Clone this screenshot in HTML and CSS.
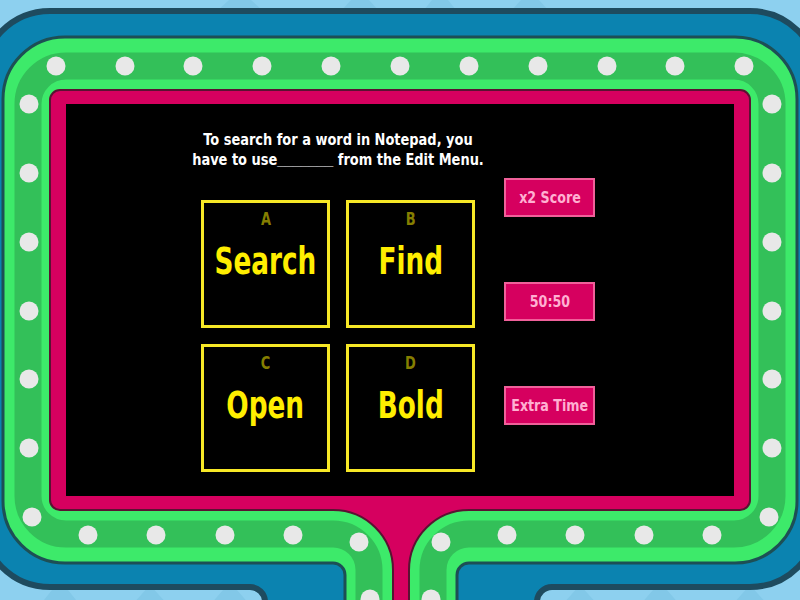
FILE: index.html
```html
<!DOCTYPE html>
<html lang="en">
<head>
<meta charset="utf-8">
<title>Game Show Quiz</title>
<link rel="stylesheet" href="styles.css">
</head>
<body>
<div class="stage">
  <svg class="frame" width="800" height="600" viewBox="0 0 800 600" aria-hidden="true">
    <rect x="0" y="0" width="800" height="600" fill="#8dd0ef"/>
    <g fill="#82c8e8">
      <polygon points="240,-10 262,10 218,10"/>
      <polygon points="360,-10 378,10 342,10"/>
      <polygon points="440,-10 456,10 424,10"/>
      <polygon points="530,-10 548,10 512,10"/>
      <polygon points="60,580 80,605 40,605"/>
      <polygon points="150,585 168,605 132,605"/>
      <polygon points="230,582 250,605 210,605"/>
      <polygon points="580,585 598,605 562,605"/>
      <polygon points="660,582 680,605 640,605"/>
      <polygon points="750,585 768,605 732,605"/>
    </g>
    <path class="blue" d="M -18 79 A 68 68 0 0 1 50 11 L 750 11 A 68 68 0 0 1 818 79 L 818 519 A 68 68 0 0 1 750 587 L 552 587 A 15 15 0 0 0 537 602 L 537 620 L 265 620 L 265 602 A 15 15 0 0 0 250 587 L 50 587 A 68 68 0 0 1 -18 519 Z"/>
    <path class="green" d="M 3 99 A 62 62 0 0 1 65 37 L 735 37 A 62 62 0 0 1 797 99 L 797 501 A 62 62 0 0 1 735 563 L 469 563 A 12 12 0 0 0 457 575 L 457 620 L 345 620 L 345 575 A 12 12 0 0 0 333 563 L 65 563 A 62 62 0 0 1 3 501 Z"/>
    <path class="band" d="M 369 620 L 369 570 A 36 36 0 0 0 333 534 L 66 534 A 38 38 0 0 1 28 496 L 28 104 A 38 38 0 0 1 66 66 L 734 66 A 38 38 0 0 1 772 104 L 772 496 A 38 38 0 0 1 734 534 L 469 534 A 36 36 0 0 0 433 570 L 433 620"/>
    <g fill="#e8e8e8">
      <circle cx="56" cy="66" r="9.5"/>
      <circle cx="125" cy="66" r="9.5"/>
      <circle cx="193" cy="66" r="9.5"/>
      <circle cx="262" cy="66" r="9.5"/>
      <circle cx="331" cy="66" r="9.5"/>
      <circle cx="400" cy="66" r="9.5"/>
      <circle cx="469" cy="66" r="9.5"/>
      <circle cx="538" cy="66" r="9.5"/>
      <circle cx="607" cy="66" r="9.5"/>
      <circle cx="675" cy="66" r="9.5"/>
      <circle cx="744" cy="66" r="9.5"/>
      <circle cx="29" cy="104" r="9.5"/>
      <circle cx="29" cy="173" r="9.5"/>
      <circle cx="29" cy="242" r="9.5"/>
      <circle cx="29" cy="311" r="9.5"/>
      <circle cx="29" cy="379" r="9.5"/>
      <circle cx="29" cy="448" r="9.5"/>
      <circle cx="32" cy="517" r="9.5"/>
      <circle cx="772" cy="104" r="9.5"/>
      <circle cx="772" cy="173" r="9.5"/>
      <circle cx="772" cy="242" r="9.5"/>
      <circle cx="772" cy="311" r="9.5"/>
      <circle cx="772" cy="379" r="9.5"/>
      <circle cx="772" cy="448" r="9.5"/>
      <circle cx="769" cy="517" r="9.5"/>
      <circle cx="88" cy="535" r="9.5"/>
      <circle cx="156" cy="535" r="9.5"/>
      <circle cx="225" cy="535" r="9.5"/>
      <circle cx="293" cy="535" r="9.5"/>
      <circle cx="359" cy="542" r="9.5"/>
      <circle cx="370" cy="599" r="9.5"/>
      <circle cx="441" cy="542" r="9.5"/>
      <circle cx="431" cy="599" r="9.5"/>
      <circle cx="507" cy="535" r="9.5"/>
      <circle cx="575" cy="535" r="9.5"/>
      <circle cx="644" cy="535" r="9.5"/>
      <circle cx="712" cy="535" r="9.5"/>
    </g>
    <path class="pink" d="M 60 90 L 740 90 A 10 10 0 0 1 750 100 L 750 500 A 10 10 0 0 1 740 510 L 469 510 A 60 60 0 0 0 409 570 L 409 620 L 393 620 L 393 570 A 60 60 0 0 0 333 510 L 60 510 A 10 10 0 0 1 50 500 L 50 100 A 10 10 0 0 1 60 90 Z"/>
  </svg>

  <div class="screen">
    <div class="main">
      <p class="question">To search for a word in Notepad, you<br>have to use<span class="blank">_______</span> from the Edit Menu.</p>
      <div class="answers">
        <div class="answer"><span class="letter">A</span><span class="text">Search</span></div>
        <div class="answer"><span class="letter">B</span><span class="text">Find</span></div>
        <div class="answer"><span class="letter">C</span><span class="text">Open</span></div>
        <div class="answer"><span class="letter">D</span><span class="text">Bold</span></div>
      </div>
    </div>
    <div class="powerups">
      <div class="power"><span class="power-label">x2 Score</span></div>
      <div class="power"><span class="power-label">50:50</span></div>
      <div class="power"><span class="power-label">Extra Time</span></div>
    </div>
  </div>
</div>
</body>
</html>
```

FILE: styles.css
```css
html, body {
  margin: 0;
  padding: 0;
  background: #8dd0ef;
}

body {
  font-family: "DejaVu Sans Condensed", "DejaVu Sans", "Liberation Sans", sans-serif;
  font-weight: bold;
}

.stage {
  position: relative;
  width: 800px;
  height: 600px;
  overflow: hidden;
  box-sizing: border-box;
  padding: 104px 0 0 66px;
}

.frame {
  position: absolute;
  left: 0;
  top: 0;
  width: 800px;
  height: 600px;
}

.blue {
  fill: #0b83b0;
  stroke: #1e4b5f;
  stroke-width: 6;
}

.green {
  fill: #3dea6a;
  stroke: #1d4f55;
  stroke-width: 3;
}

.band {
  fill: none;
  stroke: #33c059;
  stroke-width: 27;
}

.pink {
  fill: #d6005f;
  stroke: #5a1232;
  stroke-width: 2;
}

.screen {
  position: relative;
  width: 668px;
  height: 392px;
  background: #000;
  display: flex;
}

.main {
  width: 320px;
  margin-left: 112px;
  display: flex;
  flex-direction: column;
  align-items: center;
}

.question {
  margin: 26px 0 0;
  color: #ffffff;
  font-size: 16px;
  line-height: 20px;
  text-align: center;
  white-space: nowrap;
  transform: scaleX(0.9);
}

.blank {
  font-family: "Liberation Sans", sans-serif;
}

.answers {
  margin-top: 30px;
  display: grid;
  grid-template-columns: 129px 129px;
  grid-auto-rows: 128px;
  gap: 16px;
}

.answer {
  box-sizing: border-box;
  border: 3px solid #f7e826;
  display: flex;
  flex-direction: column;
  align-items: center;
}

.letter {
  margin-top: 6px;
  font-size: 17px;
  line-height: 20px;
  color: #857e00;
  transform: scaleX(0.85);
}

.text {
  display: block;
  margin-top: 13px;
  font-size: 37px;
  line-height: 40px;
  color: #ffee00;
  transform: scaleX(0.79);
}

.powerups {
  margin-left: 6px;
  padding-top: 74px;
  display: flex;
  flex-direction: column;
  gap: 65px;
}

.power {
  box-sizing: border-box;
  width: 91px;
  height: 39px;
  background: #d6005f;
  border: 2px solid #f0609a;
  color: #ffb0d2;
  font-size: 16px;
  display: flex;
  align-items: center;
  justify-content: center;
}

.power-label {
  display: block;
  white-space: nowrap;
  transform: scaleX(0.88);
}
```
